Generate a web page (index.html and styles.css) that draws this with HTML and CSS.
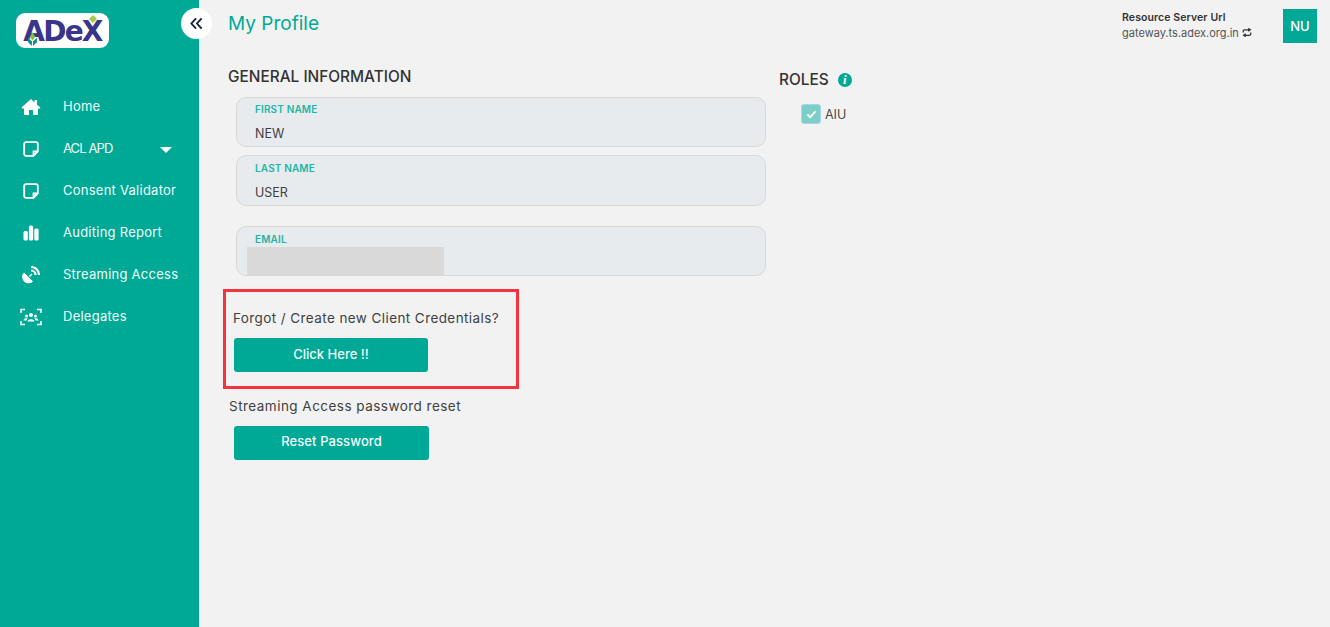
FILE: index.html
```html
<!DOCTYPE html>
<html lang="en">
<head>
<meta charset="utf-8">
<title>My Profile</title>
<link rel="stylesheet" href="styles.css">
</head>
<body>
<div class="app">
  <aside class="sidebar">
    <div class="logo">
      <span>ADeX</span>
      <svg class="logo-leaf" viewBox="0 0 12 16"><path d="M6 0 9 5 6 9 3 5Z" fill="#7cc242"/><path d="M1 6 5.500 10V15L1 11ZM11 6 6.500 10V15L11 11Z" fill="#1f8f8a"/></svg>
      <svg class="logo-gem" viewBox="0 0 10 10"><path d="M5 0 10 5 5 10 0 5Z" fill="#a9c846"/></svg>
    </div>
    <button class="collapse" aria-label="Collapse"><svg viewBox="0 0 14 14" width="13" height="13"><path d="M6.500 1.500 1.500 7l5 5.500M12.500 1.500 7.500 7l5 5.500" fill="none" stroke="#16203a" stroke-width="2"/></svg></button>
    <nav class="nav">
      <a class="nav-item"><span class="nav-icon"><svg viewBox="0 0 20 18" width="20" height="18"><path d="M10 1 0.500 9.500 2 11l1-.9V17h5v-5h4v5h5v-6.900l1 .9 1.500-1.500L16 6.700V2h-2.500v2.500Z" fill="#fff"/></svg></span>Home</a>
      <a class="nav-item"><span class="nav-icon"><svg viewBox="0 0 16 16" width="16" height="16"><path d="M3 1.200h10A1.800 1.800 0 0 1 14.800 3v7.500L10.500 14.800H3A1.800 1.800 0 0 1 1.200 13V3A1.800 1.800 0 0 1 3 1.200ZM14.500 10.500h-4v4" fill="none" stroke="#fff" stroke-width="1.800"/></svg></span><span class="nav-tight">ACL APD</span><span class="caret"></span></a>
      <a class="nav-item"><span class="nav-icon"><svg viewBox="0 0 16 16" width="16" height="16"><path d="M3 1.200h10A1.800 1.800 0 0 1 14.800 3v7.500L10.500 14.800H3A1.800 1.800 0 0 1 1.200 13V3A1.800 1.800 0 0 1 3 1.200ZM14.500 10.500h-4v4" fill="none" stroke="#fff" stroke-width="1.800"/></svg></span>Consent Validator</a>
      <a class="nav-item"><span class="nav-icon"><svg viewBox="0 0 16 16" width="16" height="16"><rect x="0.500" y="6" width="4.300" height="9.500" rx="1.500" fill="#fff"/><rect x="5.900" y="0.500" width="4.300" height="15" rx="1.500" fill="#fff"/><rect x="11.300" y="3.500" width="4.300" height="12" rx="1.500" fill="#fff"/></svg></span>Auditing Report</a>
      <a class="nav-item"><span class="nav-icon"><svg viewBox="0 0 18 18" width="18" height="18"><path d="M2 6.500 11 15.500A6.300 6.300 0 0 1 2 6.500Z" fill="#fff"/><path d="M7.500 10.500 10 8" stroke="#fff" stroke-width="1.500"/><path d="M9 4.500A4.500 4.500 0 0 1 13.500 9M9 1A8 8 0 0 1 17 9" fill="none" stroke="#fff" stroke-width="2.200"/></svg></span>Streaming Access</a>
      <a class="nav-item"><span class="nav-icon"><svg viewBox="0 0 22 18" width="22" height="18"><path d="M1 5V1.500h4M17 1.500h4V5M1 13v3.500h4M17 16.500h4V13" fill="none" stroke="#fff" stroke-width="1.500"/><circle cx="11" cy="7" r="2" fill="#fff"/><circle cx="6.500" cy="8" r="1.500" fill="#fff"/><circle cx="15.500" cy="8" r="1.500" fill="#fff"/><path d="M7.500 13.500C7.500 10.500 14.500 10.500 14.500 13.500ZM3.500 12.500C3.500 10 7 10 7.500 10.500L6.500 12.500ZM18.500 12.500C18.500 10 15 10 14.500 10.500L15.500 12.500Z" fill="#fff"/></svg></span>Delegates</a>
    </nav>
  </aside>
  <main class="main">
    <header class="topbar">
      <h1 class="title">My Profile</h1>
      <div class="server">
        <div class="server-label">Resource Server Url</div>
        <div class="server-url">gateway.ts.adex.org.in <svg viewBox="0 0 12 10" width="10" height="9"><path d="M1.500 5V3.200A1.500 1.500 0 0 1 3 1.700h6M7.500 0 10 1.700 7.500 3.500M10.500 5v1.800A1.500 1.500 0 0 1 9 8.300H3M4.500 6.500 2 8.300 4.500 10" fill="none" stroke="#333" stroke-width="1.500"/></svg></div>
      </div>
      <div class="avatar">NU</div>
    </header>
    <div class="content">
      <section class="general">
        <h2 class="section-title">GENERAL INFORMATION</h2>
        <div class="field">
          <div class="field-label">FIRST NAME</div>
          <div class="field-value">NEW</div>
        </div>
        <div class="field field-last">
          <div class="field-label">LAST NAME</div>
          <div class="field-value">USER</div>
        </div>
        <div class="field field-email">
          <div class="field-label">EMAIL</div>
          <div class="redacted"></div>
        </div>
        <div class="highlight">
          <p class="prompt">Forgot / Create new Client Credentials?</p>
          <button class="btn btn-click">Click Here !!</button>
        </div>
        <p class="prompt prompt-stream">Streaming Access password reset</p>
        <button class="btn btn-reset">Reset Password</button>
      </section>
      <section class="roles">
        <h2 class="section-title roles-title">ROLES <span class="info">i</span></h2>
        <label class="role"><span class="check"><svg viewBox="0 0 12 10" width="11" height="9"><path d="M1.500 5 4.500 8 10.500 1.500" fill="none" stroke="#fff" stroke-width="2"/></svg></span>AIU</label>
      </section>
    </div>
  </main>
</div>
</body>
</html>
```
FILE: styles.css
```css
* { box-sizing: border-box; }
html, body { margin: 0; height: 100%; }
body {
  background: #f2f2f2;
  font-family: Inter, "Liberation Sans", sans-serif;
  color: #3a3a3a;
  overflow: hidden;
}
.app { display: flex; height: 627px; }
.sidebar {
  position: relative;
  width: 199px;
  flex: none;
  background: #00a996;
  padding: 13px 0 0 0;
}
.logo {
  position: relative;
  width: 93px;
  height: 35px;
  margin-left: 16px;
  padding-top: 2px;
  background: #fff;
  border-radius: 9px;
  display: flex;
  align-items: center;
  justify-content: center;
  font-family: "DejaVu Sans", sans-serif;
  font-weight: 700;
  font-size: 28px;
  letter-spacing: -1.800px;
  color: #39358b;
}
.logo-leaf { position: absolute; left: 11px; top: 19px; width: 11px; height: 15px; }
.logo-gem { position: absolute; left: 73px; top: 2px; width: 8px; height: 8px; }
.collapse {
  position: absolute;
  left: 181px;
  top: 8px;
  width: 31px;
  height: 31px;
  border: 0;
  border-radius: 50%;
  background: #fff;
  padding: 0 1px 0 0;
  display: flex;
  align-items: center;
  justify-content: center;
}
.nav { display: flex; flex-direction: column; margin-top: 38px; }
.nav-item {
  display: flex;
  align-items: center;
  height: 42px;
  padding-bottom: 2px;
  color: #f0fbfa;
  font-size: 13px;
  letter-spacing: 0.25px;
  white-space: nowrap;
}
.nav-tight { letter-spacing: -0.900px; width: 53px; }
.nav-icon {
  width: 63px;
  margin-top: 2px;
  padding-right: 2px;
  flex: none;
  display: flex;
  justify-content: center;
}
.caret {
  margin-left: 44px;
  border-left: 6px solid transparent;
  border-right: 6px solid transparent;
  border-top: 6px solid #fff;
  margin-top: 4px;
}
.main { flex: 1; min-width: 0; display: flex; flex-direction: column; }
.topbar { display: flex; align-items: flex-start; height: 63px; padding: 9px 13px 0 29px; }
.title {
  margin: 1px 0 0;
  flex: 1;
  font-size: 19px;
  line-height: 28px;
  font-weight: 400;
  color: #00a996;
}
.server { width: 161px; padding-top: 2px; }
.server-label { font-size: 10.500px; font-weight: 600; line-height: 14px; color: #333; letter-spacing: 0.1px; }
.server-url { font-size: 11px; line-height: 16px; color: #555; white-space: nowrap; }
.avatar {
  width: 34px;
  height: 34px;
  background: #00a996;
  color: #fff;
  font-size: 13px;
  font-weight: 500;
  display: flex;
  align-items: center;
  justify-content: center;
}
.content { display: flex; padding-left: 24px; }
.general { width: 556px; flex: none; }
.section-title {
  margin: 1px 0 7px 5px;
  font-size: 15.400px;
  line-height: 26px;
  font-weight: 500;
  color: #333;
}
.field {
  width: 530px;
  height: 50px;
  margin-left: 13px;
  background: #e8ebee;
  border: 1px solid #d6d8da;
  border-radius: 10px;
  padding: 5px 18px 0;
}
.field-last { margin-top: 8px; height: 51px; padding-top: 6px; }
.field-email { margin-top: 20px; position: relative; padding-top: 6px; }
.field-label {
  font-size: 10px;
  line-height: 12px;
  font-weight: 600;
  color: #1db5a6;
  letter-spacing: 0.15px;
}
.field-value { margin-top: 11px; font-size: 12.500px; line-height: 16px; color: #3f3f3f; }
.redacted {
  position: absolute;
  left: 10px;
  top: 20px;
  width: 197px;
  height: 28px;
  background: #d9d9d9;
}
.highlight {
  width: 296px;
  height: 100px;
  margin-top: 13px;
  border: 3px solid #f4333d;
  padding: 17px 0 0 7px;
}
.prompt { margin: 0; font-size: 13.500px; line-height: 18px; letter-spacing: 0.41px; color: #3f3f3f; white-space: nowrap; }
.prompt-stream { margin: 8px 0 0 6px; letter-spacing: 0.47px; }
.btn {
  display: block;
  height: 34px;
  border: 0;
  border-radius: 3px;
  background: #00a996;
  color: #f2fbfa;
  font-family: inherit;
  font-size: 13px;
  font-weight: 500;
  padding: 0 0 2px;
}
.btn-click { width: 194px; margin: 11px 0 0 1px; }
.btn-reset { width: 195px; margin: 11px 0 0 11px; padding-bottom: 4px; letter-spacing: 0.1px; }
.section-title.roles-title {
  margin: 4px 0 11px 0;
  display: flex;
  align-items: center;
  gap: 9px;
}
.info {
  width: 14px;
  height: 14px;
  border-radius: 50%;
  background: #00a996;
  color: #fff;
  font-size: 13px;
  font-weight: 700;
  font-style: italic;
  font-family: "Liberation Serif", serif;
  display: flex;
  align-items: center;
  justify-content: center;
}
.role {
  display: flex;
  align-items: center;
  gap: 4px;
  margin-left: 22px;
  font-size: 12.500px;
  color: #4a4a4a;
}
.check {
  width: 20px;
  height: 20px;
  border-radius: 3px;
  background: #7dcec7;
  border: 1px solid #a8d4f0;
  display: flex;
  align-items: center;
  justify-content: center;
}
```
